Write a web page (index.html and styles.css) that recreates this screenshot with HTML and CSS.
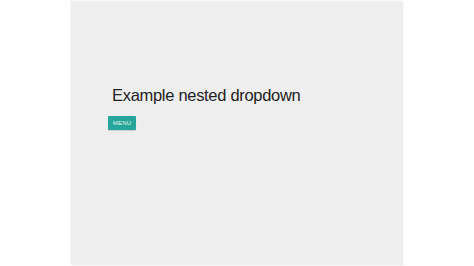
FILE: index.html
```html
<!DOCTYPE html>
<html lang="en">
<head>
  <meta charset="UTF-8">
  <title>Example nested dropdown</title>
  <link rel="stylesheet" href="styles.css">
</head>
<body>

<div class="page">
  <h1>Example nested dropdown</h1>
  <div class="menu-wrap">
    <button class="menu-btn">MENU</button>
  </div>
</div>

</body>
</html>
```

FILE: styles.css
```css
* {
  box-sizing: border-box;
  margin: 0;
  padding: 0;
}
body {
  font-family: 'Liberation Sans', sans-serif;
  background: #fff;
  display: flex;
  justify-content: center;
  height: 266px;
  overflow: hidden;
}

.page {
  width: 332px;
  margin-top: 1px;
  height: 264px;
  background: #eeeeee;
  box-shadow: 0 0 2px rgba(0, 0, 0, .08);
  padding: 84px 0 0 41px;
}

h1 {
  font-size: 16.5px;
  font-weight: 400;
  letter-spacing: -0.3px;
  color: #222;
  line-height: 20px;
}

.menu-wrap {
  margin-top: 11px;
  margin-left: -4px;
}
.menu-btn {
  display: block;
  width: 28px;
  height: 14px;
  background: #26a69a;
  color: #e8f6f4;
  border: none;
  border-radius: 1px;
  font-family: 'Liberation Sans', sans-serif;
  font-size: 6px;
  letter-spacing: .2px;
  box-shadow: 0 1px 1px rgba(0, 0, 0, .15);
}
```
